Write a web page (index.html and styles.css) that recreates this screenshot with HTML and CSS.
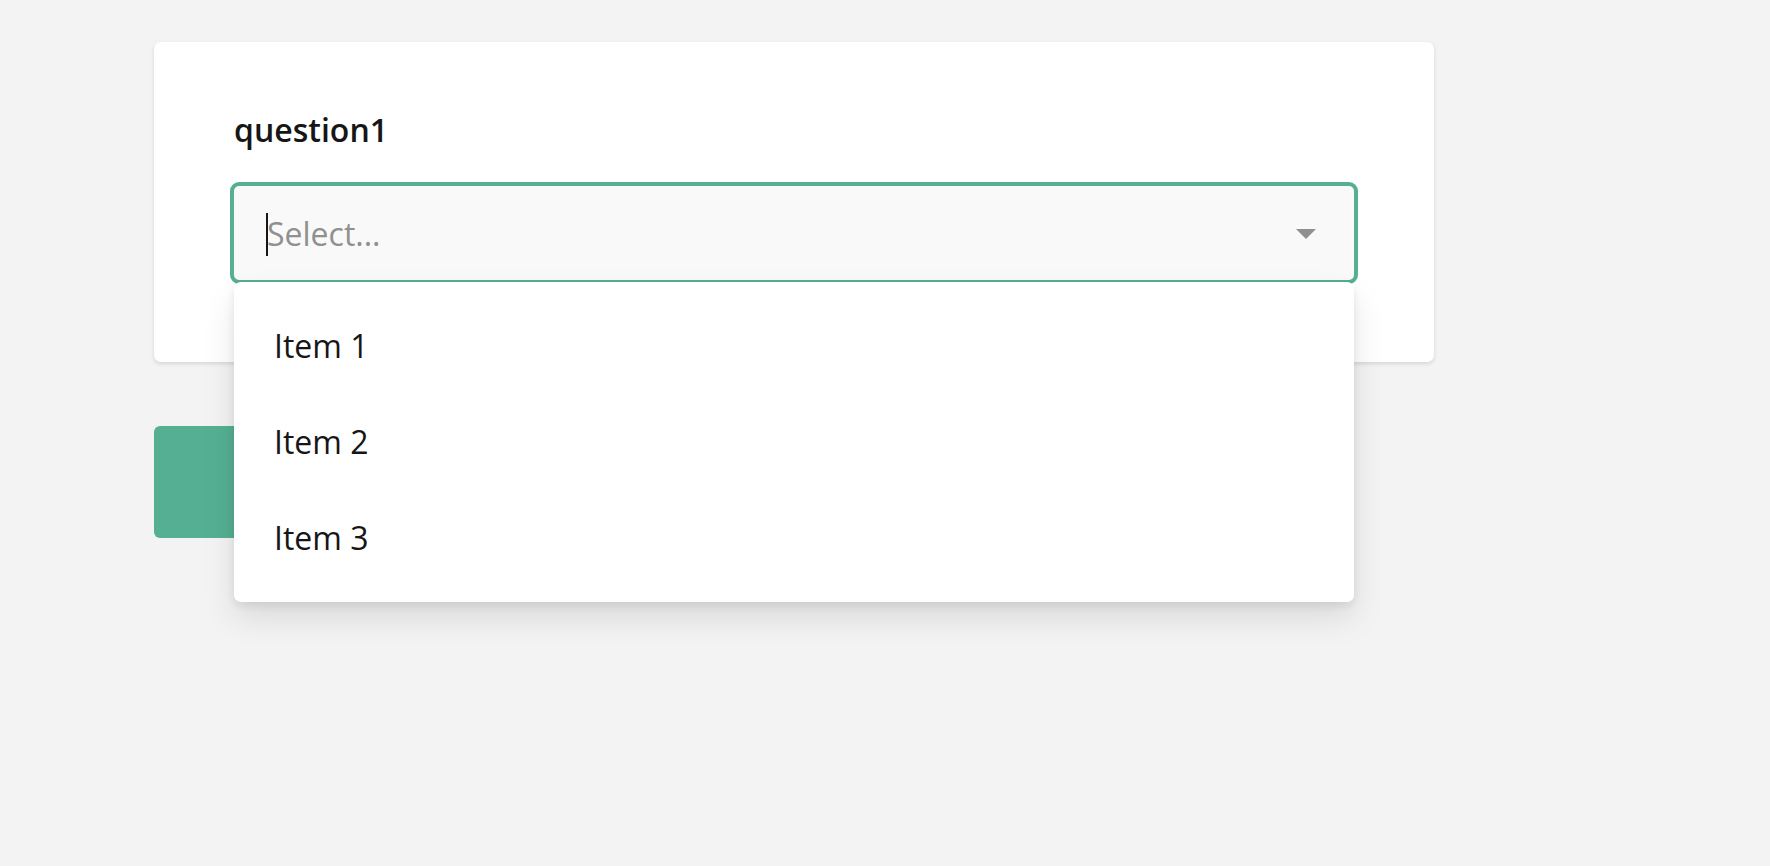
FILE: index.html
```html
<!DOCTYPE html>
<html lang="en">
<head>
<meta charset="utf-8">
<title>Survey</title>
<link rel="stylesheet" href="styles.css">
</head>
<body>
<div class="page">
  <div class="card">
    <div class="question-title">question1</div>
    <div class="select-wrap">
      <div class="select-input">
        <span class="caret"></span>
        <span class="placeholder">Select...</span>
        <svg class="arrow" width="20" height="10" viewBox="0 0 20 10" aria-hidden="true"><path d="M0 0 H20 L10 10 Z" fill="#909090"/></svg>
      </div>
      <div class="popup">
        <div class="popup-item">Item 1</div>
        <div class="popup-item">Item 2</div>
        <div class="popup-item">Item 3</div>
      </div>
    </div>
  </div>
  <div class="nav">
    <button class="complete-btn" type="button">Complete</button>
  </div>
</div>
</body>
</html>
```

FILE: styles.css
```css
html, body {
  margin: 0;
  padding: 0;
  background: #f3f3f3;
  font-family: "Open Sans", "Noto Sans", sans-serif;
}

.page {
  min-height: 866px;
  box-sizing: border-box;
  padding: 42px 0 0 154px;
}

.card {
  width: 1280px;
  box-sizing: border-box;
  background: #ffffff;
  border-radius: 7px;
  box-shadow: 0 2px 4px rgba(0, 0, 0, 0.12);
  padding: 64px 76px 78px 76px;
}

.question-title {
  font-size: 32px;
  line-height: 48px;
  font-weight: 600;
  color: #161616;
  margin-bottom: 28px;
  padding-left: 4px;
}

.select-wrap {
  position: relative;
}

.select-input {
  height: 102px;
  box-sizing: border-box;
  border: 4px solid #55af93;
  border-radius: 9px;
  background: #f9f9f9;
  display: flex;
  align-items: center;
  padding: 2px 38px 0 32px;
}

.caret {
  width: 2px;
  height: 43px;
  background: #161616;
  flex: none;
}

.placeholder {
  font-size: 32px;
  line-height: 48px;
  color: #909090;
  margin-left: -1px;
}

.arrow {
  margin-left: auto;
  flex: none;
}

.popup {
  position: absolute;
  left: 4px;
  top: 100px;
  width: 1120px;
  box-sizing: border-box;
  padding: 16px 0;
  background: #ffffff;
  border-radius: 7px;
  box-shadow: 0 4px 8px rgba(0, 0, 0, 0.08), 0 16px 32px rgba(0, 0, 0, 0.1);
  z-index: 10;
}

.popup-item {
  padding: 24px 40px;
  font-size: 32px;
  line-height: 48px;
  color: #161616;
}

.nav {
  margin-top: 64px;
  display: flex;
}

.complete-btn {
  height: 112px;
  padding: 0 96px;
  border: none;
  border-radius: 6px;
  background: #55b093;
  color: #ffffff;
  font-family: "Open Sans", "Noto Sans", sans-serif;
  font-size: 32px;
  font-weight: 600;
}
```
